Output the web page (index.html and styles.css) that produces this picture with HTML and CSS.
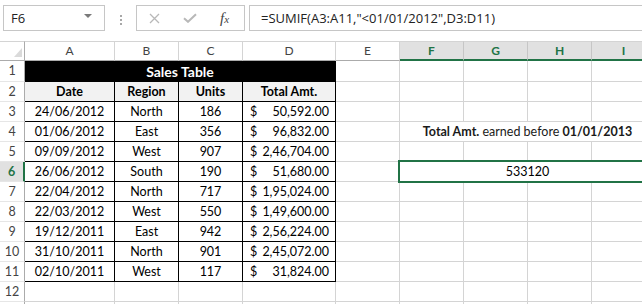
FILE: index.html
```html
<!DOCTYPE html>
<html lang="en">
<head>
    <meta charset="UTF-8">
    <title>Sales Table - SUMIF</title>
    <link rel="stylesheet" href="styles.css">
</head>
<body>
    <div class="toolbar">
        <div class="name-box"><span>F6</span><span class="caret"></span></div>
        <div class="grip"><i></i><i></i><i></i></div>
        <div class="fx-box">
            <svg class="cancel" width="11" height="11" viewBox="0 0 11 11"><path d="M1 1L10 10M10 1L1 10" stroke="#b8b8b8" stroke-width="1.3" fill="none"/></svg>
            <svg class="enter" width="14" height="10" viewBox="0 0 14 10"><path d="M1 5.2L5 8.8L13 1.2" stroke="#b8b8b8" stroke-width="2" fill="none"/></svg>
            <span class="fx">f<small>x</small></span>
        </div>
        <div class="formula">=SUMIF(A3:A11,"&lt;01/01/2012",D3:D11)</div>
    </div>

    <div class="sheet">
        <!-- column headers -->
        <div class="c corner"><svg width="8" height="9" viewBox="0 0 8 9"><polygon points="8,0 8,9 0,9" fill="#dadada"/></svg></div>
        <div class="c hd">A</div><div class="c hd">B</div><div class="c hd">C</div><div class="c hd">D</div><div class="c hd">E</div>
        <div class="c hd sel">F</div><div class="c hd sel">G</div><div class="c hd sel">H</div><div class="c hd sel">I</div>

        <!-- row 1 -->
        <div class="c rh">1</div>
        <div class="c t title">Sales Table</div>
        <div class="c"></div><div class="c"></div><div class="c"></div><div class="c"></div><div class="c"></div>

        <!-- row 2 -->
        <div class="c rh">2</div>
        <div class="c t th">Date</div><div class="c t th">Region</div><div class="c t th">Units</div><div class="c t th">Total Amt.</div>
        <div class="c"></div><div class="c"></div><div class="c"></div><div class="c"></div><div class="c"></div>

        <!-- rows 3 - 11 -->
        <div class="c rh">3</div>
        <div class="c t ctr">24/06/2012</div><div class="c t ctr">North</div><div class="c t ctr">186</div><div class="c t money"><span>$</span><span>50,592.00</span></div>
        <div class="c"></div><div class="c"></div><div class="c"></div><div class="c"></div><div class="c"></div>

        <div class="c rh">4</div>
        <div class="c t ctr">01/06/2012</div><div class="c t ctr">East</div><div class="c t ctr">356</div><div class="c t money"><span>$</span><span>96,832.00</span></div>
        <div class="c"></div>
        <div class="c merged note"><b>Total Amt.</b> earned before <b>01/01/2013</b></div>

        <div class="c rh">5</div>
        <div class="c t ctr">09/09/2012</div><div class="c t ctr">West</div><div class="c t ctr">907</div><div class="c t money"><span>$</span><span>2,46,704.00</span></div>
        <div class="c"></div><div class="c"></div><div class="c"></div><div class="c"></div><div class="c"></div>

        <div class="c rh sel">6</div>
        <div class="c t ctr">26/06/2012</div><div class="c t ctr">South</div><div class="c t ctr">190</div><div class="c t money"><span>$</span><span>51,680.00</span></div>
        <div class="c"></div>
        <div class="c merged ctr">533120</div>

        <div class="c rh">7</div>
        <div class="c t ctr">22/04/2012</div><div class="c t ctr">North</div><div class="c t ctr">717</div><div class="c t money"><span>$</span><span>1,95,024.00</span></div>
        <div class="c"></div><div class="c"></div><div class="c"></div><div class="c"></div><div class="c"></div>

        <div class="c rh">8</div>
        <div class="c t ctr">22/03/2012</div><div class="c t ctr">West</div><div class="c t ctr">550</div><div class="c t money"><span>$</span><span>1,49,600.00</span></div>
        <div class="c"></div><div class="c"></div><div class="c"></div><div class="c"></div><div class="c"></div>

        <div class="c rh">9</div>
        <div class="c t ctr">19/12/2011</div><div class="c t ctr">East</div><div class="c t ctr">942</div><div class="c t money"><span>$</span><span>2,56,224.00</span></div>
        <div class="c"></div><div class="c"></div><div class="c"></div><div class="c"></div><div class="c"></div>

        <div class="c rh">10</div>
        <div class="c t ctr">31/10/2011</div><div class="c t ctr">North</div><div class="c t ctr">901</div><div class="c t money"><span>$</span><span>2,45,072.00</span></div>
        <div class="c"></div><div class="c"></div><div class="c"></div><div class="c"></div><div class="c"></div>

        <div class="c rh">11</div>
        <div class="c t ctr">02/10/2011</div><div class="c t ctr">West</div><div class="c t ctr">117</div><div class="c t money"><span>$</span><span>31,824.00</span></div>
        <div class="c"></div><div class="c"></div><div class="c"></div><div class="c"></div><div class="c"></div>

        <!-- row 12 and the top sliver of the next row -->
        <div class="c rh">12</div>
        <div class="c"></div><div class="c"></div><div class="c"></div><div class="c"></div><div class="c"></div><div class="c"></div><div class="c"></div><div class="c"></div><div class="c"></div>
        <div class="c rh"></div>
        <div class="c"></div><div class="c"></div><div class="c"></div><div class="c"></div><div class="c"></div><div class="c"></div><div class="c"></div><div class="c"></div><div class="c"></div>

        <div class="selection"></div>
    </div>
</body>
</html>
```

FILE: styles.css
```css
body {
    margin: 0;
    width: 642px;
    height: 304px;
    overflow: hidden;
    background: #fff;
    font-family: 'Lato', sans-serif;
    color: #000;
}

/* formula bar */
.toolbar {
    display: flex;
    align-items: flex-start;
    height: 41px;
    padding: 5px 0 0 3px;
    box-sizing: border-box;
    font-family: 'Open Sans', sans-serif;
    font-size: 13px;
    color: #222;
}
.name-box {
    display: flex;
    align-items: center;
    justify-content: space-between;
    width: 102px;
    height: 26px;
    padding: 0 12px 1px 7px;
    border: 1px solid #c6c6c6;
    box-sizing: border-box;
}
.caret {
    width: 0;
    height: 0;
    border-left: 4px solid transparent;
    border-right: 4px solid transparent;
    border-top: 4px solid #7a7a7a;
    margin-top: -3px;
}
.grip {
    display: flex;
    flex-direction: column;
    gap: 2px;
    margin: 10px 0 0 15px;
}
.grip i {
    display: block;
    width: 2px;
    height: 2px;
    background: #a8a8a8;
}
.fx-box {
    display: flex;
    align-items: center;
    width: 109px;
    height: 26px;
    margin-left: 14px;
    padding: 0 0 0 12px;
    border: 1px solid #c6c6c6;
    box-sizing: border-box;
}
.enter {
    margin-left: 23px;
}
.fx {
    margin-left: 23px;
    font-family: 'Liberation Serif', serif;
    font-style: italic;
    font-size: 15px;
    color: #444;
}
.fx small {
    font-size: 11px;
}
.formula {
    flex: 1;
    height: 26px;
    margin-left: 4px;
    padding: 1px 0 0 11px;
    line-height: 23px;
    border: 1px solid #c6c6c6;
    border-right: none;
    box-sizing: border-box;
    white-space: nowrap;
}

/* sheet grid */
.sheet {
    position: relative;
    display: grid;
    grid-template-columns: 25px 90px 64px 64px 93px 64px 64px 64px 64px 64px;
    grid-template-rows: 20px 21px repeat(12, 20px);
    font-size: 12.5px;
}
.c {
    box-sizing: border-box;
    border-right: 1px solid #d4d4d4;
    border-bottom: 1px solid #d4d4d4;
    padding: 1px 5px 0;
    line-height: 18px;
    white-space: nowrap;
    overflow: hidden;
}
.corner {
    display: flex;
    align-items: flex-end;
    justify-content: flex-end;
    padding: 0 2px 3px 0;
    border-top: 1px solid #d4d4d4;
    border-right-color: #ababab;
    border-bottom-color: #ababab;
}
.hd {
    padding: 0;
    text-align: center;
    font-size: 12px;
    color: #444;
    border-top: 1px solid #d4d4d4;
    border-bottom-color: #ababab;
}
.hd.sel {
    background: #e1e1e1;
    color: #217346;
    font-weight: bold;
    border-right-color: #c6c6c6;
    border-bottom: 2px solid #217346;
}
.rh {
    padding: 1px 0 0;
    text-align: center;
    color: #444;
    border-right-color: #ababab;
    border-bottom-color: #e6e6e6;
}
.rh.sel {
    background: #e1e1e1;
    color: #217346;
    font-weight: bold;
    border-right: 2px solid #217346;
}

/* sales table */
.t {
    border-right-color: #000;
    border-bottom-color: #000;
}
.title {
    grid-column: span 4;
    background: #000;
    color: #fff;
    font-weight: bold;
    font-size: 14px;
    text-align: center;
    line-height: 19px;
}
.th {
    background: #f2f2f2;
    font-weight: bold;
    text-align: center;
}
.ctr {
    text-align: center;
}
.money {
    display: flex;
    justify-content: space-between;
    padding: 1px 6px 0 7px;
}

/* merged cells F:I */
.merged {
    grid-column: span 4;
}
.note {
    text-align: center;
    color: #1a1a1a;
}

.selection {
    position: absolute;
    top: 119px;
    left: 398px;
    width: 260px;
    height: 23px;
    border: 2px solid #217346;
    box-sizing: border-box;
}
```
